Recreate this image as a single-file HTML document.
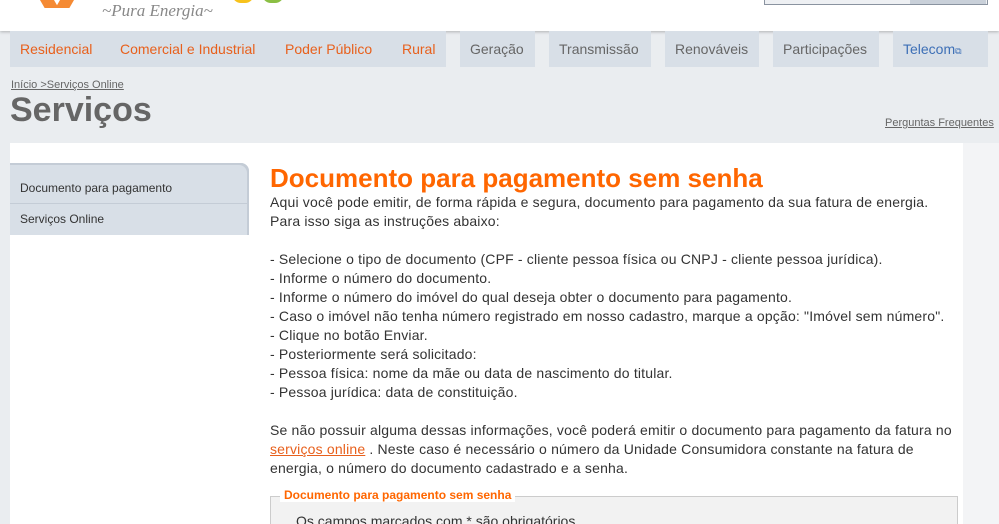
<!DOCTYPE html>
<html style="overflow:hidden;width:999px;height:524px"><head><meta charset="utf-8"><style>
body{margin:0;width:999px;height:524px;overflow:hidden;background:#eaedf0;font-family:"Liberation Sans",Arial,sans-serif;position:relative}
.hdr{position:absolute;left:0;top:0;width:999px;height:31px;background:#fff;box-shadow:0 1px 3px rgba(0,0,0,.25);overflow:hidden}
.tab{position:absolute;top:31px;height:36px;background:#d8dfe7;font-size:14px;line-height:36px;color:#666}
.tab span{position:absolute;top:0}
.o{color:#e8601c}
a{color:#666}
.panel{position:absolute;left:10px;top:143px;width:953px;height:381px;background:#fff;overflow:hidden}
.strip{position:absolute;left:963px;top:143px;width:36px;height:381px;background:#f3f4f6}
.side{position:absolute;left:10px;top:163px;width:239px;height:72px;background:#d8dfe7;border-top-right-radius:8px;box-shadow:inset -2px 2px 0 #c4ccd6;font-size:12px;color:#333}
.content{position:absolute;left:270px;top:163px;width:720px;font-size:14px;line-height:19px;color:#333;letter-spacing:.18px}
h1{margin:0;font-size:26px;color:#ff6600;line-height:30px;letter-spacing:0}
p{margin:0}
</style></head><body>
<div class="hdr">
<div style="position:absolute;left:40px;top:-8px;width:14px;height:16px;background:#f58a33;transform:skewX(30deg)"></div>
<div style="position:absolute;left:60px;top:-8px;width:14px;height:16px;background:#f58a33;transform:skewX(-30deg)"></div>
<div style="position:absolute;left:102px;top:1px;font-family:'Liberation Serif',serif;font-style:italic;font-size:17px;color:#888">~Pura Energia~</div>
<div style="position:absolute;left:232px;top:-6px;width:22px;height:9px;border-radius:0 0 11px 11px;background:#f7c21c"></div>
<div style="position:absolute;left:262px;top:-6px;width:22px;height:9px;border-radius:0 0 11px 11px;background:#8bbf44"></div>
<div style="position:absolute;left:764px;top:-2px;width:222px;height:6px;border:1px solid #8a93a0;border-top:0;background:#eef0f3"></div>
<div style="position:absolute;left:910px;top:-2px;width:76px;height:6px;background:#c9d0d9"></div>
</div>
<div class="tab" style="left:10px;width:436px">
<span class="o" style="left:10px">Residencial</span><span class="o" style="left:110px">Comercial e Industrial</span><span class="o" style="left:275px">Poder Público</span><span class="o" style="left:392px">Rural</span></div>
<div class="tab" style="left:460px;width:75px"><span style="left:10px">Geração</span></div>
<div class="tab" style="left:549px;width:102px"><span style="left:10px">Transmissão</span></div>
<div class="tab" style="left:665px;width:94px"><span style="left:10px">Renováveis</span></div>
<div class="tab" style="left:773px;width:106px"><span style="left:10px">Participações</span></div>
<div class="tab" style="left:893px;width:95px"><span style="left:10px;color:#3d6fb6">Telecom<small style="font-size:9px">⧉</small></span></div>
<div style="position:absolute;left:11px;top:79px;font-size:11px"><a href="#">Início &gt;Serviços Online</a></div>
<div style="position:absolute;left:10px;top:91px;font-size:34px;font-weight:bold;color:#666">Serviços</div>
<div style="position:absolute;left:885px;top:117px;font-size:11px"><a href="#">Perguntas Frequentes</a></div>
<div class="panel">
<div style="position:absolute;left:260px;top:353px;width:686px;height:60px;border:1px solid #ccc;background:#f2f2f2"></div>
<div style="position:absolute;left:270px;top:345px;padding:0 4px;background:#fff;font-size:12px;font-weight:bold;color:#ff6600">Documento para pagamento sem senha</div>
<div style="position:absolute;left:286px;top:370px;font-size:14px;color:#333">Os campos marcados com * são obrigatórios</div>
</div>
<div class="strip"></div>
<div class="side">
<div style="position:absolute;left:10px;top:18px">Documento para pagamento</div>
<div style="position:absolute;left:0;top:40px;width:237px;height:1px;background:#c4ccd6"></div>
<div style="position:absolute;left:10px;top:49px">Serviços Online</div>
</div>
<div class="content">
<h1>Documento para pagamento sem senha</h1>
<p>Aqui você pode emitir, de forma rápida e segura, documento para pagamento da sua fatura de energia.<br>Para isso siga as instruções abaixo:<br><br>
- Selecione o tipo de documento (CPF - cliente pessoa física ou CNPJ - cliente pessoa jurídica).<br>
- Informe o número do documento.<br>
- Informe o número do imóvel do qual deseja obter o documento para pagamento.<br>
- Caso o imóvel não tenha número registrado em nosso cadastro, marque a opção: "Imóvel sem número".<br>
- Clique no botão Enviar.<br>
- Posteriormente será solicitado:<br>
- Pessoa física: nome da mãe ou data de nascimento do titular.<br>
- Pessoa jurídica: data de constituição.<br><br>
Se não possuir alguma dessas informações, você poderá emitir o documento para pagamento da fatura no<br><a href="#" style="color:#e8601c">serviços online</a> . Neste caso é necessário o número da Unidade Consumidora constante na fatura de<br>energia, o número do documento cadastrado e a senha.</p>
</div>
</body></html>
